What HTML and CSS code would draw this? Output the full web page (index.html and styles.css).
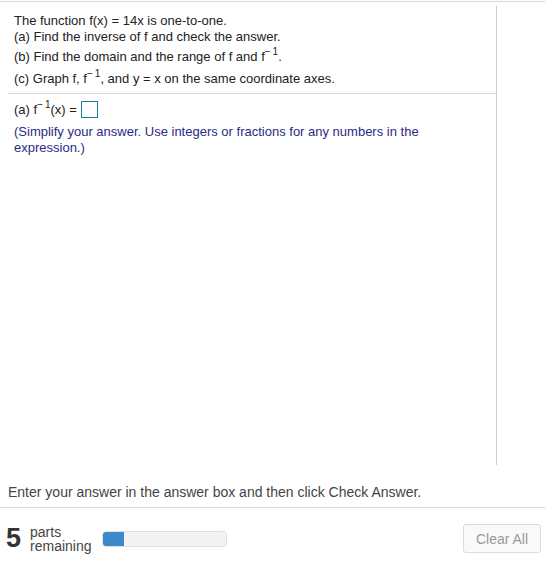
FILE: index.html
```html
<!DOCTYPE html>
<html lang="en">
<head>
    <meta charset="UTF-8">
    <meta name="viewport" content="width=device-width, initial-scale=1.0">
    <title>Question</title>
    <link rel="stylesheet" href="styles.css">
</head>
<body>
    <div class="top-rule"></div>
    <main class="workspace">
        <section class="question">
            <div class="statement">
                <div class="line">The function f(x) = 14x is one-to-one.</div>
                <div class="line">(a) Find the inverse of f and check the answer.</div>
                <div class="line tall">(b) Find the domain and the range of f and f<sup>&minus;&thinsp;1</sup>.</div>
                <div class="line tall">(c) Graph f, f<sup>&minus;&thinsp;1</sup>, and y = x on the same coordinate axes.</div>
            </div>
            <div class="answer">
                <div class="line tall">(a) f<sup>&minus;&thinsp;1</sup>(x) = <span class="answer-box"></span></div>
                <div class="hint">(Simplify your answer. Use integers or fractions for any numbers in the expression.)</div>
            </div>
        </section>
    </main>
    <p class="instructions">Enter your answer in the answer box and then click Check Answer.</p>
    <footer class="status">
        <div class="parts">
            <span class="parts-count">5</span>
            <span class="parts-label">parts<br>remaining</span>
        </div>
        <div class="progress"><div class="progress-fill" style="width: 21px;"></div></div>
        <button class="clear-btn" type="button">Clear All</button>
    </footer>
</body>
</html>
```

FILE: styles.css
```css
body {
    font-family: "Liberation Sans", Arial, sans-serif;
    margin: 0;
    padding: 0;
    background-color: #ffffff;
    color: #222;
}
.top-rule {
    margin-top: 1px;
    border-top: 1px solid #d6d6de;
}
.workspace {
    display: flex;
    height: 459px;
    margin-top: 4px;
}
.question {
    margin-left: 8px;
    width: 488px;
    border-right: 1px solid #c9d0dc;
}
.statement {
    padding: 7px 6px 6px 6px;
    font-size: 13px;
    border-bottom: 1px solid #d6d6de;
}
.line {
    line-height: 16px;
}
.statement .line.tall {
    padding-top: 2px;
}
.statement .line.tall + .line.tall {
    padding-top: 4px;
}
sup {
    font-size: 10px;
    line-height: 10px;
    vertical-align: 6px;
}
.answer {
    padding: 0 6px 8px;
    font-size: 13px;
}
.answer .line.tall {
    padding-top: 6px;
}
.answer-box {
    display: inline-block;
    width: 15px;
    height: 15px;
    border: 1px solid #1b7a9e;
    vertical-align: -4px;
}
.hint {
    color: #2b2b86;
    line-height: 16px;
    margin-top: 6px;
}
.instructions {
    margin: 19px 0 0;
    padding: 0 8px 7px;
    font-size: 14px;
    line-height: 16px;
    color: #444;
    border-bottom: 1px solid #d6d6de;
}
.status {
    display: flex;
    align-items: center;
    padding: 15px 4px 0 6px;
}
.parts {
    display: flex;
    align-items: center;
    width: 96px;
}
.parts-count {
    font-size: 27px;
    font-weight: bold;
    color: #333;
    margin-right: 9px;
}
.parts-label {
    font-size: 14px;
    line-height: 14px;
    color: #444;
}
.progress {
    width: 123px;
    height: 14px;
    border: 1px solid #e0e0e0;
    border-radius: 4px;
    background-color: #f3f3f3;
    overflow: hidden;
}
.progress-fill {
    height: 100%;
    background-color: #3d88c9;
}
.clear-btn {
    margin-left: auto;
    width: 78px;
    height: 29px;
    font-family: inherit;
    font-size: 14px;
    color: #999;
    background-color: #f9f9f9;
    border: 1px solid #dcdcdc;
    border-radius: 3px;
}
```
